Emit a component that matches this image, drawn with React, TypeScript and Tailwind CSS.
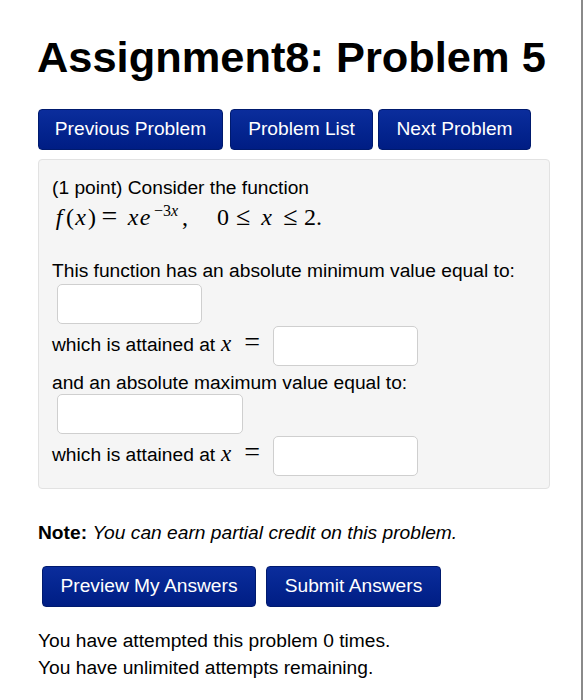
import React from 'react'

const sans = { fontFamily: '"Liberation Sans", Arial, sans-serif' }
const serif = { fontFamily: '"Liberation Serif", "DejaVu Serif", serif' }

function NavButton({ label, className = '' }: { label: string; className?: string }) {
  return (
    <button
      type="button"
      className={
        'h-[41px] rounded-[4px] border border-[#001a6e] bg-gradient-to-b from-[#0b2d9c] to-[#001d84] text-[19.2px] text-white ' +
        className
      }
    >
      {label}
    </button>
  )
}

function AnswerBox({ className = '' }: { className?: string }) {
  return <div className={'h-[40px] rounded-[5px] border border-[#cfcfcf] bg-white ' + className} />
}

// one math glyph in a fixed-width slot, so spacing follows the MathJax render
function G({ w, children, className = '' }: { w: string; children: React.ReactNode; className?: string }) {
  return <span className={'inline-block text-center leading-[20px] ' + w + ' ' + className}>{children}</span>
}

function Attained() {
  return (
    <div className="flex h-[40px] items-center">
      <span className="relative top-[-2px] flex w-[221px] items-baseline whitespace-nowrap leading-[24px]">
        which is attained at&nbsp;
        <span className="flex items-baseline" style={serif}>
          <G w="w-[11px]" className="text-[23px] italic">x</G>
          <G w="w-[19px]" className="ml-[11px] text-[28px]">=</G>
        </span>
      </span>
      <AnswerBox className="w-[145px]" />
    </div>
  )
}

export default function App() {
  return (
    <div className="relative min-h-[700px] w-[588px] bg-white text-black" style={sans}>
      <div className="absolute right-[5px] top-0 h-[700px] w-[2px] bg-[#8a8a8a]" />
      <div className="pl-[38px] pt-[32px]">
        <h1 className="ml-[-1px] text-[43.4px] font-bold leading-[50px]">Assignment8: Problem 5</h1>
        <div className="mt-[27px] flex">
          <NavButton label="Previous Problem" className="w-[185px]" />
          <NavButton label="Problem List" className="ml-[7px] w-[143px]" />
          <NavButton label="Next Problem" className="ml-[5px] w-[153px]" />
        </div>
        <div className="mt-[9px] w-[512px] rounded-[4px] border border-[#e2e2e2] bg-[#f5f5f5] pb-[12px] pl-[13px] pt-[14px] text-[19.2px]">
          <div className="leading-[28px]">(1 point) Consider the function</div>
          <div className="flex h-[28px] items-baseline whitespace-nowrap pt-[4px] text-[24px]" style={serif}>
            <G w="w-[14px]" className="italic">f</G>
            <G w="w-[7px]">(</G>
            <G w="w-[15px]" className="italic">x</G>
            <G w="w-[7px]">)</G>
            <G w="w-[19px]" className="ml-[5px] text-[28px]">=</G>
            <G w="w-[12px]" className="ml-[8px] italic">x</G>
            <G w="w-[12px]" className="italic">e</G>
            <G w="w-[30px]" className="relative top-[-9px] text-[16px]">
              −3<i>x</i>
            </G>
            <G w="w-[8px]">,</G>
            <G w="w-[12px]" className="ml-[28px]">0</G>
            <G w="w-[14px]" className="ml-[7px] text-[26px]">≤</G>
            <G w="w-[13px]" className="ml-[10px] italic">x</G>
            <G w="w-[15px]" className="ml-[10px] text-[26px]">≤</G>
            <G w="w-[20px]" className="ml-[5px]">2.</G>
          </div>
          <div className="mt-[27px] leading-[28px]">This function has an absolute minimum value equal to:</div>
          <AnswerBox className="ml-[5px] mt-[-1px] w-[145px]" />
          <div className="mt-[2px]">
            <Attained />
          </div>
          <div className="mt-[1px] leading-[32px]">and an absolute maximum value equal to:</div>
          <AnswerBox className="ml-[5px] mt-[-5px] w-[186px]" />
          <div className="mt-[2px]">
            <Attained />
          </div>
        </div>
        <div className="mt-[32px] text-[19.2px] leading-[24px]">
          <b>Note:</b> <i>You can earn partial credit on this problem.</i>
        </div>
        <div className="ml-[4px] mt-[21px] flex gap-[10px]">
          <NavButton label="Preview My Answers" className="w-[214px]" />
          <NavButton label="Submit Answers" className="w-[175px]" />
        </div>
        <div className="mt-[20px] text-[19.2px] leading-[27px]">
          <div>You have attempted this problem 0 times.</div>
          <div>You have unlimited attempts remaining.</div>
        </div>
      </div>
    </div>
  )
}
